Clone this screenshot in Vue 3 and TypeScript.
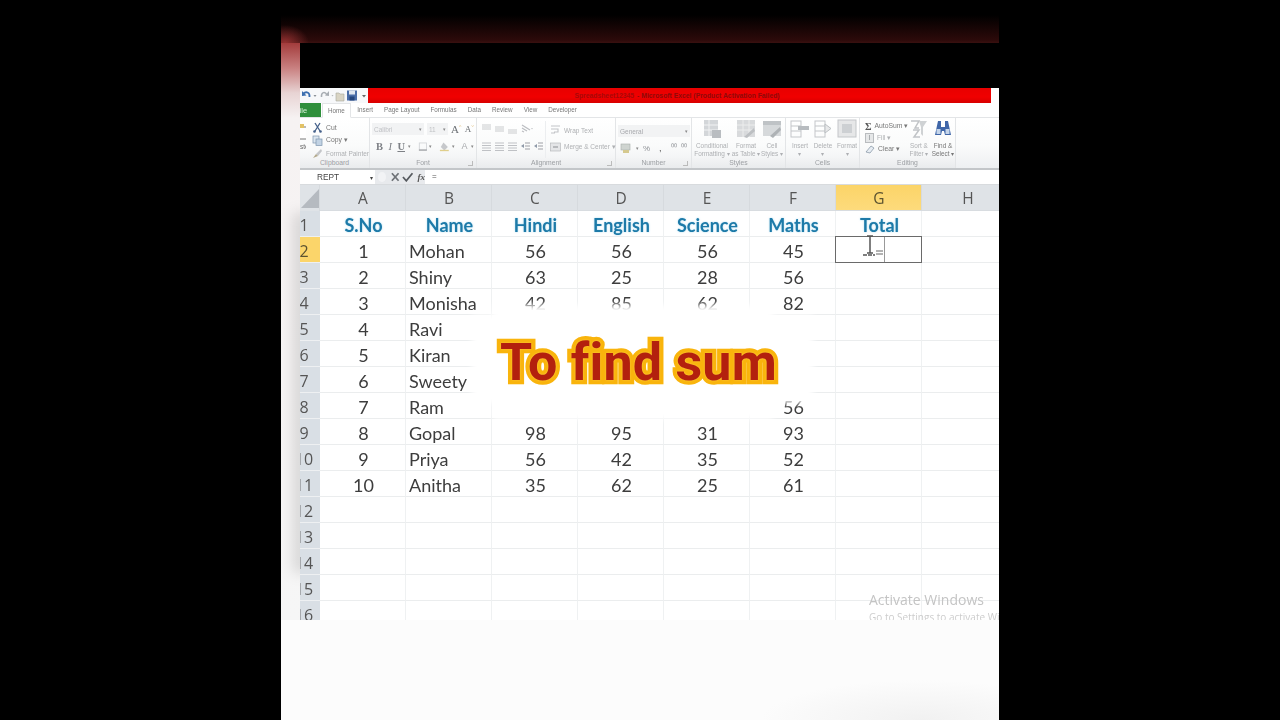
<script setup lang="ts">
interface Row { n: string; cells: string[]; head?: boolean }
const columns: string[] = ['A', 'B', 'C', 'D', 'E', 'F', 'G', 'H']
const body: string[][] = [
  ['S.No', 'Name', 'Hindi', 'English', 'Science', 'Maths', 'Total', ''],
  ['1', 'Mohan', '56', '56', '56', '45', '', ''],
  ['2', 'Shiny', '63', '25', '28', '56', '', ''],
  ['3', 'Monisha', '42', '85', '62', '82', '', ''],
  ['4', 'Ravi', '', '', '', '', '', ''],
  ['5', 'Kiran', '', '', '', '', '', ''],
  ['6', 'Sweety', '', '', '', '', '', ''],
  ['7', 'Ram', '', '', '', '56', '', ''],
  ['8', 'Gopal', '98', '95', '31', '93', '', ''],
  ['9', 'Priya', '56', '42', '35', '52', '', ''],
  ['10', 'Anitha', '35', '62', '25', '61', '', ''],
]
const rows: Row[] = Array.from({ length: 16 }, (_, i) => ({
  n: String(i + 1),
  cells: body[i] ?? ['', '', '', '', '', '', '', ''],
  head: i === 0,
}))
const tabs: string[] = ['Home', 'Insert', 'Page Layout', 'Formulas', 'Data', 'Review', 'View', 'Developer']
</script>

<template>
  <div class="page">
    <div class="stage">
      <div class="top-band"></div>
      <div class="main">
        <div class="strip"></div>
        <div class="content">
          <div class="black"></div>
          <div class="excel">
            <div class="chrome">
              <div class="title-row">
                <div class="qat">
                  <svg width="68" height="15" viewBox="0 0 68 15">
                    <path d="M3 6 C6 3 10 4 9.5 9" fill="none" stroke="#3c6fb0" stroke-width="1.8" />
                    <path d="M2 3 L2 8 L6.5 7.5 Z" fill="#3c6fb0" />
                    <path d="M13.5 7 h3 l-1.5 2 Z" fill="#8a8f96" />
                    <path d="M27 7 C25 3 21 4 21.500 9" fill="none" stroke="#a8adb3" stroke-width="1.5" />
                    <path d="M29 3 L29 8 L25 7.500 Z" fill="#a8adb3" />
                    <path d="M31.500 7 h2 l-1 1.500 Z" fill="#b5b8bc" />
                    <path d="M36 5 h3 l1 1 h4 v7 h-8 Z" fill="#d9d4c4" stroke="#a9a9a0" stroke-width=".6" />
                    <rect x="47" y="2.500" width="10" height="10" fill="#4a6da8" />
                    <rect x="49" y="2.500" width="6" height="4" fill="#dfe6f0" />
                    <rect x="49.500" y="8.500" width="5" height="4" fill="#23447c" />
                    <path d="M62 7 h4 l-2 2.500 Z" fill="#666" />
                  </svg>
                </div>
                <div class="red-bar">
                  <span class="doc-name">Spreadsheet12345</span>
                  <span>- Microsoft Excel (Product Activation Failed)</span>
                </div>
                <div class="title-end"></div>
              </div>

              <div class="tab-row">
                <div class="file-tab"><span>File</span></div>
                <div class="tab active">Home</div>
                <div v-for="t in tabs.slice(1)" :key="t" class="tab">{{ t }}</div>
              </div>

              <div class="ribbon">
                <section class="grp g-clip">
                  <div class="g-body clip-body">
                    <div class="paste">
                      <svg width="8" height="16" viewBox="0 0 8 16">
                        <rect x="-6" y="3" width="13" height="12" fill="#fff" stroke="#777" />
                        <rect x="-4" y="0" width="8" height="4" fill="#e2c266" />
                      </svg>
                      <span>ste</span>
                    </div>
                    <div class="stack">
                      <div class="line strong">
                        <svg width="11" height="11" viewBox="0 0 11 11"><path d="M3 1 L8 9 M8 1 L3 9" stroke="#44608a" stroke-width="1.300" fill="none" /><circle cx="2.500" cy="9.500" r="1.300" fill="#44608a" /><circle cx="8.500" cy="9.500" r="1.300" fill="#44608a" /></svg>
                        <span>Cut</span>
                      </div>
                      <div class="line strong">
                        <svg width="11" height="11" viewBox="0 0 11 11"><rect x="1" y="1" width="6" height="7" fill="#dce6f0" stroke="#7d94ad" stroke-width=".7" /><rect x="4" y="4" width="6" height="6.500" fill="#c2d3e4" stroke="#7d94ad" stroke-width=".7" /></svg>
                        <span>Copy ▾</span>
                      </div>
                      <div class="line">
                        <svg width="11" height="11" viewBox="0 0 11 11"><path d="M9 1 L4 6 L6 8 L10 3 Z" fill="#c4c6c9" /><path d="M4 6 L1 10 L6 8 Z" fill="#b3a98c" /></svg>
                        <span>Format Painter</span>
                      </div>
                    </div>
                  </div>
                  <div class="g-label">Clipboard</div>
                </section>

                <section class="grp g-font">
                  <div class="g-body col">
                    <div class="ctl-row">
                      <div class="combo w-font"><span>Calibri</span><i>▾</i></div>
                      <div class="combo w-size"><span>11</span><i>▾</i></div>
                      <span class="big-a">A<sup>˄</sup></span>
                      <span class="big-a small">A<sup>˅</sup></span>
                    </div>
                    <div class="ctl-row fmt">
                      <b class="fb">B</b><em class="fb it">I</em><u class="fb">U</u><i class="arr">▾</i>
                      <svg class="gap-l" width="11" height="11" viewBox="0 0 11 11"><rect x="1.500" y="1.500" width="8" height="8" fill="none" stroke="#d3d5d8" /><path d="M1 9.500 h9" stroke="#9a9da1" stroke-width="1.300" /></svg>
                      <i class="arr">▾</i>
                      <svg class="gap-l" width="12" height="11" viewBox="0 0 12 11"><path d="M5 1 L10 6 L6 10 L2 6 Z" fill="#c6c8cb" /><path d="M1 10 h10" stroke="#e0cf8c" stroke-width="1.500" /></svg>
                      <i class="arr">▾</i>
                      <span class="fb col-a">A</span><i class="arr">▾</i>
                    </div>
                  </div>
                  <div class="g-label">Font<i class="launch"></i></div>
                </section>

                <section class="grp g-align">
                  <div class="g-body align-body">
                    <div class="col align-icons">
                      <div class="ic-row">
                        <svg v-for="y in [2, 4, 7]" :key="y" width="11" height="11" viewBox="0 0 11 11"><path :d="`M1 ${y} h9 M1 ${y + 2} h9 M1 ${y + 4} h9`" stroke="#c9cbce" stroke-width="1.200" /></svg>
                        <svg width="14" height="11" viewBox="0 0 14 11"><path d="M2 2 L10 7 M2 5 L7 8 M2 8 L4 9" stroke="#bcbec2" stroke-width="1.300" /><path d="M11 5 h2 l-1 1.500 Z" fill="#c5c7ca" /></svg>
                      </div>
                      <div class="ic-row">
                        <svg v-for="k in 3" :key="k" width="11" height="11" viewBox="0 0 11 11"><path d="M1 2 h9 M1 4.500 h9 M1 7 h9 M1 9.500 h9" stroke="#bfc1c5" stroke-width="1.200" /></svg>
                        <svg v-for="k in 2" :key="'i' + k" width="11" height="11" viewBox="0 0 11 11"><path d="M5 2 h5 M5 5 h5 M5 8 h5" stroke="#9da0a5" stroke-width="1.200" /><path d="M1 5 L4 3 L4 7 Z" fill="#8e99a8" /></svg>
                      </div>
                    </div>
                    <div class="col align-text">
                      <div class="line"><svg width="11" height="10" viewBox="0 0 11 10"><path d="M1 1 h9 M1 4 h7 v3 h-4 M1 8 h4" stroke="#c2c4c7" stroke-width="1.100" fill="none" /></svg><span>Wrap Text</span></div>
                      <div class="line"><svg width="11" height="10" viewBox="0 0 11 10"><rect x=".5" y="1" width="10" height="8" fill="#e4e5e7" stroke="#b8babd" stroke-width=".7" /><path d="M3 5 h5" stroke="#8a8d91" /></svg><span>Merge &amp; Center ▾</span></div>
                    </div>
                  </div>
                  <div class="g-label">Alignment<i class="launch"></i></div>
                </section>

                <section class="grp g-num">
                  <div class="g-body col">
                    <div class="combo w-gen"><span>General</span><i>▾</i></div>
                    <div class="ctl-row num-row">
                      <svg width="12" height="11" viewBox="0 0 12 11"><rect x="1" y="1" width="9" height="6" fill="#cfd4d0" stroke="#a9adaa" stroke-width=".6" /><rect x="3" y="7" width="6" height="3" fill="#d5c98f" /></svg>
                      <i class="arr">▾</i><span class="nsym">%</span><span class="nsym bold">,</span>
                      <span class="nsym tiny">⁰⁰</span><span class="nsym tiny">⁰⁰</span>
                    </div>
                  </div>
                  <div class="g-label">Number<i class="launch"></i></div>
                </section>

                <section class="grp g-styles">
                  <div class="g-body bigs">
                    <div class="big b-cond">
                      <svg width="20" height="20" viewBox="0 0 20 20"><rect x="2" y="1" width="14" height="16" fill="#d3d6d9" /><path d="M7 1 v16 M2 6 h14 M2 11 h14" stroke="#f1f2f3" /><rect x="10" y="11" width="9" height="8" fill="#b9bdc1" /></svg>
                      <span>Conditional<br />Formatting ▾</span>
                    </div>
                    <div class="big b-fmt">
                      <svg width="20" height="20" viewBox="0 0 20 20"><rect x="1" y="1" width="18" height="17" fill="#d8dadc" /><path d="M7 1 v17 M13 1 v17 M1 6 h18 M1 11 h18" stroke="#eceded" /><path d="M8 18 L18 9 L19 12 L11 19 Z" fill="#bcbfc2" /></svg>
                      <span>Format<br />as Table ▾</span>
                    </div>
                    <div class="big b-cell">
                      <svg width="20" height="20" viewBox="0 0 20 20"><rect x="1" y="2" width="18" height="15" fill="#d6d9db" /><rect x="1" y="2" width="18" height="4" fill="#bfc3c6" /><path d="M8 17 L18 8 L19 11 L11 19 Z" fill="#aeb2b5" /></svg>
                      <span>Cell<br />Styles ▾</span>
                    </div>
                  </div>
                  <div class="g-label">Styles</div>
                </section>

                <section class="grp g-cells">
                  <div class="g-body bigs">
                    <div class="big b-ins">
                      <svg width="20" height="20" viewBox="0 0 20 20"><rect x="1" y="2" width="10" height="16" fill="none" stroke="#c3c6c9" /><path d="M1 7 h10 M1 12 h10" stroke="#c3c6c9" /><rect x="8" y="7" width="11" height="4" fill="#b7bbbf" /></svg>
                      <span>Insert<br />▾</span>
                    </div>
                    <div class="big b-del">
                      <svg width="20" height="20" viewBox="0 0 20 20"><rect x="2" y="2" width="10" height="16" fill="none" stroke="#c3c6c9" /><path d="M2 7 h10 M2 12 h10" stroke="#c3c6c9" /><path d="M12 5 L18 9.500 L12 14 Z" fill="#e8e9ea" stroke="#bcc0c3" /></svg>
                      <span>Delete<br />▾</span>
                    </div>
                    <div class="big b-for">
                      <svg width="20" height="20" viewBox="0 0 20 20"><rect x="1" y="1" width="18" height="17" fill="#e6e7e8" stroke="#c3c6c9" /><rect x="5" y="5" width="10" height="9" fill="#cdd0d3" /></svg>
                      <span>Format<br />▾</span>
                    </div>
                  </div>
                  <div class="g-label">Cells</div>
                </section>

                <section class="grp g-edit">
                  <div class="g-body bigs">
                    <div class="stack edit-stack">
                      <div class="line strong"><span class="sigma">Σ</span><span>AutoSum ▾</span></div>
                      <div class="line"><svg width="9" height="10" viewBox="0 0 9 10"><rect x=".5" y=".5" width="8" height="9" fill="#e5e7e8" stroke="#b9bcbf" /><path d="M4.500 2 v5" stroke="#a9adb0" /></svg><span>Fill ▾</span></div>
                      <div class="line strong"><svg width="10" height="10" viewBox="0 0 10 10"><path d="M1 8 L6 2 L9 4 L5 9 Z" fill="#e7edf3" stroke="#7f8f9f" stroke-width=".7" /></svg><span>Clear ▾</span></div>
                    </div>
                    <div class="big b-sort">
                      <svg width="18" height="20" viewBox="0 0 18 20"><path d="M1 2 h8 L5 9 h4 M3 11 h6 L4 18 h6" fill="none" stroke="#c1c4c7" stroke-width="1.500" /><path d="M9 2 h8 l-4 6 v9 l-2 -2 v-7 Z" fill="#cfd2d4" /></svg>
                      <span>Sort &amp;<br />Filter ▾</span>
                    </div>
                    <div class="big b-find dark">
                      <svg width="20" height="20" viewBox="0 0 20 20"><path d="M5 2 h3 v6 h4 V2 h3 l3 14 h-6 l-1 -4 h-2 l-1 4 H2 Z" fill="#3f66a8" /><rect x="3.500" y="10" width="4" height="5" fill="#c5d5ea" /><rect x="12.500" y="10" width="4" height="5" fill="#c5d5ea" /></svg>
                      <span>Find &amp;<br />Select ▾</span>
                    </div>
                  </div>
                  <div class="g-label">Editing</div>
                </section>
              </div>
            </div>

            <div class="formula-bar">
              <div class="name-box"><span>REPT</span><i>▾</i></div>
              <div class="fx-tools">
                <span class="dot"></span>
                <svg width="11" height="10" viewBox="0 0 11 10"><path d="M2 1 L9 9 M9 1 L2 9" stroke="#6e7277" stroke-width="1.800" /></svg>
                <svg width="12" height="10" viewBox="0 0 12 10"><path d="M1 5 L4.500 9 L11 1" fill="none" stroke="#55595e" stroke-width="1.800" /></svg>
                <span class="fx">fx</span>
              </div>
              <div class="fx-input">=</div>
            </div>

            <div class="sheet">
              <div class="grid">
                <div class="corner"><svg width="20" height="26" viewBox="0 0 20 26"><path d="M19 4 V23 H1 Z" fill="#b5bac0" /></svg></div>
                <div v-for="c in columns" :key="c" class="col-head" :class="{ sel: c === 'G' }">{{ c }}</div>
                <template v-for="r in rows" :key="r.n">
                  <div class="row-head" :class="{ sel: r.n === '2' }"><span>{{ r.n }}</span></div>
                  <div
                    v-for="(v, i) in r.cells"
                    :key="i"
                    class="cell"
                    :class="{ left: i === 1 && !r.head, head: r.head }"
                  >{{ v }}</div>
                </template>
              </div>
              <div class="active-cell">
                <svg class="cursor" width="24" height="24" viewBox="0 0 24 24">
                  <path d="M5 1 h6 M8 1 v17 M5 18 h6" stroke="#555" stroke-width="1.500" fill="none" />
                  <path d="M1 20 h12" stroke="#555" stroke-width="1.300" stroke-dasharray="4 1" />
                  <path d="M14 16 h7 M14 19 h7" stroke="#666" stroke-width="1.200" />
                </svg>
              </div>
              <div class="activate">
                <div class="a1">Activate Windows</div>
                <div class="a2">Go to Settings to activate Windows.</div>
              </div>
            </div>
          </div>
        </div>
      </div>
      <div class="bottom"></div>

      <div class="veil veil-a"></div>
      <div class="veil veil-b"></div>
      <div class="headline">To find sum</div>
    </div>
  </div>
</template>

<style>
html, body { margin: 0; background: #000; }
</style>

<style scoped>
.page { width: 1280px; height: 720px; background: #000; overflow: hidden; }
.stage { position: relative; width: 718px; height: 720px; margin-left: 281px; display: flex; flex-direction: column; overflow: hidden; background: #000; }
.top-band { height: 43px; flex: none; background:
  radial-gradient(ellipse 24px 18px at 4px 43px, rgba(165, 55, 55, .85), rgba(165, 55, 55, 0)),
  linear-gradient(180deg, #000 0, #000 15px, #170505 28px, #2c0a0a 40px, #3a1110 43px); }
.main { display: flex; height: 577px; flex: none; }
.strip { position: relative; width: 19px; flex: none; overflow: hidden; background: linear-gradient(180deg, #a33c3c 0, #c98080 25px, #e8d4d4 50px, #f6f2f2 75px, #f6f6f6 100%); }
.strip::after { content: ""; position: absolute; right: -8px; top: 170px; width: 14px; height: 360px; background: rgba(0, 0, 0, .14); filter: blur(7px); }
.content { width: 699px; flex: none; display: flex; flex-direction: column; }
.black { height: 45px; flex: none; background: #000; }
.excel { height: 532px; flex: none; background: #fff; font-family: "Liberation Sans", Arial, sans-serif; display: flex; flex-direction: column; overflow: hidden; }
.chrome { filter: blur(.45px); flex: none; }
.bottom { flex: 1; background: radial-gradient(ellipse 160px 40px at 640px 100px, #f1f1f1, rgba(241, 241, 241, 0)), #fcfcfc; }

.title-row { display: flex; height: 15px; }
.qat { width: 68px; flex: none; background: #f7f8fa; overflow: hidden; }
.qat svg { display: block; }
.red-bar { flex: 1; background: linear-gradient(180deg, #e80000, #f00000 60%, #d80000); display: flex; justify-content: center; gap: 3px; align-items: center; padding-right: 5px; font-size: 6.800px; font-weight: bold; color: #8e0a0a; white-space: nowrap; }
.doc-name { color: #a80808; }
.title-end { width: 8px; flex: none; background: #fff; }

.tab-row { display: flex; height: 15px; align-items: center; font-size: 6.300px; color: #777; border-bottom: 1px solid #e3e5e7; box-sizing: border-box; }
.file-tab { width: 21px; height: 14px; background: #2f8f3c; color: #d8f0da; overflow: hidden; display: flex; align-items: center; font-size: 7.500px; }
.file-tab span { margin-left: -5px; }
.tab { padding: 0 5.500px; line-height: 14px; }
.tab.active { border: 1px solid #e3e5e7; border-bottom: 1px solid #fff; height: 15px; line-height: 13px; box-sizing: border-box; background: #fff; padding: 0 5px; margin: 0 1px 0 1px; }

.ribbon { display: flex; height: 52px; box-sizing: border-box; background: linear-gradient(180deg, #fff 0, #fafbfb 55%, #eef0f2 100%); border-bottom: 2px solid #c3c6c9; font-size: 6.500px; color: #aeb0b3; }
.grp { display: flex; flex-direction: column; border-right: 1px solid #e3e5e7; box-sizing: border-box; flex: none; }
.g-body { flex: 1; min-height: 0; padding-top: 3px; }
.g-label { position: relative; flex: none; height: 10px; line-height: 10px; text-align: center; font-size: 6.800px; color: #9da0a4; background: linear-gradient(180deg, #f3f4f5, #e9ebed); }
.launch { position: absolute; right: 3px; bottom: 2px; width: 4px; height: 4px; border-right: 1px solid #bbb; border-bottom: 1px solid #bbb; }
.col { display: flex; flex-direction: column; }
.g-clip { width: 70px; }
.g-font { width: 107px; }
.g-align { width: 139px; }
.g-num { width: 76px; }
.g-styles { width: 94px; }
.g-cells { width: 74px; }
.g-edit { width: 96px; }
.clip-body { display: flex; gap: 6px; padding-top: 4px; }
.paste { width: 8px; display: flex; flex-direction: column; gap: 3px; color: #666; font-size: 6.500px; overflow: hidden; padding-top: 2px; }
.stack { display: flex; flex-direction: column; gap: 3px; }
.line { display: flex; align-items: center; gap: 3px; height: 10px; white-space: nowrap; }
.strong { color: #777; font-size: 6.800px; }
.g-font .g-body { padding: 5px 2px 0; gap: 5px; }
.ctl-row { display: flex; align-items: center; gap: 3px; height: 12px; }
.combo { display: flex; align-items: center; justify-content: space-between; height: 12px; background: #f2f3f4; padding: 0 2px; box-sizing: border-box; color: #c0c2c5; }
.combo i, .arr { font-style: normal; font-size: 5px; color: #888; }
.w-font { width: 55px; }
.w-size { width: 22px; }
.w-gen { width: 72px; margin: 4px 0 5px 2px; color: #a8aaad; }
.big-a { font-family: "Liberation Serif", serif; font-size: 11px; color: #6b6f74; line-height: 12px; }
.big-a.small { font-size: 9px; }
.big-a sup { font-size: 5px; vertical-align: top; line-height: 6px; color: #d0a040; }
.fmt { padding-left: 3px; gap: 2px; }
.fb { font-family: "Liberation Serif", serif; font-size: 10.500px; color: #7e8186; width: 10px; text-align: center; font-style: normal; font-weight: bold; }
.it { font-style: italic; font-weight: normal; }
.col-a { color: #a8aaad; margin-left: 3px; font-weight: normal; font-family: "Liberation Sans", sans-serif; font-size: 9px; }
.gap-l { margin-left: 5px; }
.align-body { display: flex; padding-left: 4px; }
.align-icons { gap: 7px; width: 70px; padding-top: 2px; }
.ic-row { display: flex; gap: 2px; align-items: center; height: 11px; }
.align-text { gap: 7px; padding-top: 4px; border-left: 1px solid #eceef0; margin-left: 1px; padding-left: 4px; }
.num-row { padding-left: 4px; gap: 4px; }
.nsym { font-size: 8px; color: #8e9196; }
.nsym.bold { font-weight: bold; margin-left: 5px; margin-right: 6px; color: #777; }
.nsym.tiny { font-size: 9px; line-height: 8px; color: #a0a3a7; }
.bigs { display: flex; align-items: flex-start; }
.big { display: flex; flex-direction: column; align-items: center; text-align: center; line-height: 8px; font-size: 6.400px; gap: 3px; flex: none; white-space: nowrap; }
.big svg { display: block; }
.g-styles .g-body, .g-cells .g-body, .g-edit .g-body { padding-top: 1px; }
.b-cond { width: 40px; }
.b-fmt { width: 28px; }
.b-cell { width: 24px; }
.b-ins { width: 22px; margin-left: 3px; }
.b-del { width: 24px; }
.b-for { width: 24px; }
.edit-stack { width: 46px; padding: 2px 0 0 5px; gap: 1.500px; box-sizing: border-box; }
.sigma { font-size: 10px; color: #555; font-weight: bold; font-family: "Liberation Serif", serif; }
.b-sort { width: 24px; margin-left: 1px; }
.b-find { width: 24px; }
.dark { color: #777; }

.formula-bar { display: flex; height: 15px; flex: none; background: #e8eaed; font-size: 8px; color: #666; align-items: stretch; border-bottom: 1px solid #d8dbde; filter: blur(.4px); box-sizing: border-box; }
.name-box { width: 75px; flex: none; background: #fff; display: flex; align-items: center; justify-content: space-between; padding: 0 2px 0 17px; box-sizing: border-box; color: #444; font-size: 8.300px; }
.name-box i { font-style: normal; font-size: 6px; color: #444; }
.fx-tools { width: 50px; flex: none; display: flex; align-items: center; gap: 2px; padding-left: 3px; box-sizing: border-box; }
.dot { width: 8px; height: 10px; border-radius: 50%; background: #f2f3f5; margin-right: 2px; }
.fx { font-family: "Liberation Serif", serif; font-style: italic; font-weight: bold; color: #555; font-size: 9px; margin-left: 2px; }
.fx-input { flex: 1; background: #fff; padding-left: 7px; line-height: 14px; color: #555; }

.sheet { position: relative; flex: 1; min-height: 0; overflow: hidden; background: #fff; }
.grid { display: grid; grid-template-columns: 20px repeat(7, 86px) 92px; grid-auto-rows: 26px; font-family: Lato, "Liberation Sans", sans-serif; font-size: 18px; color: #3d3d3d; filter: blur(.35px); }
.corner { background: #dfe3e7; border-right: 1px solid #d6dade; }
.corner svg { display: block; }
.col-head { background: #dfe3e7; border-right: 1px solid #d6dade; display: flex; align-items: center; justify-content: center; padding-left: 1px; font-family: "Open Sans", sans-serif; font-size: 15.500px; color: #555; box-sizing: border-box; border-bottom: 1px solid #d8dce0; }
.col-head.sel { background: linear-gradient(180deg, #fbd468, #fddb7c); color: #5c5330; }
.row-head { background: #d9dfe5; border-bottom: 1px solid #eef0f2; overflow: hidden; box-sizing: border-box; font-family: "Open Sans", sans-serif; font-size: 16px; color: #555; line-height: 28px; }
.row-head span { display: block; width: 32px; margin-left: -12px; text-align: center; }
.row-head.sel { background: #fbd56a; color: #5c5330; }
.cell { border-right: 1px solid #eff1f2; border-bottom: 1px solid #ebedee; box-sizing: border-box; display: flex; align-items: center; justify-content: center; padding: 2px 0 0 2px; white-space: nowrap; line-height: 24px; overflow: hidden; }
.cell.left { justify-content: flex-start; padding-left: 3px; }
.cell.head { color: #1d7aa8; font-weight: bold; text-shadow: 0 0 2px rgba(110, 190, 225, .6); }
.active-cell { position: absolute; left: 535px; top: 51px; width: 87px; height: 27px; border: 1.500px solid #6a6a6a; box-sizing: border-box; }
.active-cell::after { content: ""; position: absolute; left: 48px; top: 0; bottom: 0; width: 1px; background: #999; }
.cursor { position: absolute; left: 26px; top: -2px; overflow: visible; }
.activate { position: absolute; left: 569px; top: 406px; white-space: nowrap; font-family: "Open Sans", sans-serif; color: #c4c4c4; filter: blur(.3px); }
.a1 { font-size: 14px; line-height: 18px; }
.a2 { font-size: 10px; line-height: 14px; margin-top: 1px; color: #cdcdcd; }

.veil { position: absolute; background: #fff; filter: blur(3px); }
.veil-a { left: 212px; top: 305px; width: 280px; height: 114px; }
.veil-b { left: 191px; top: 315px; width: 341px; height: 88px; }
.headline { position: absolute; left: 219px; top: 332px; font-family: Roboto, "Liberation Sans", sans-serif; font-weight: 700; font-size: 52px; letter-spacing: .2px; line-height: 62px; color: #b3200e; -webkit-text-stroke: 8.500px #f9b40c; paint-order: stroke fill; white-space: nowrap; text-shadow: 0 0 2px #ffd24a; filter: blur(.4px); }
</style>
